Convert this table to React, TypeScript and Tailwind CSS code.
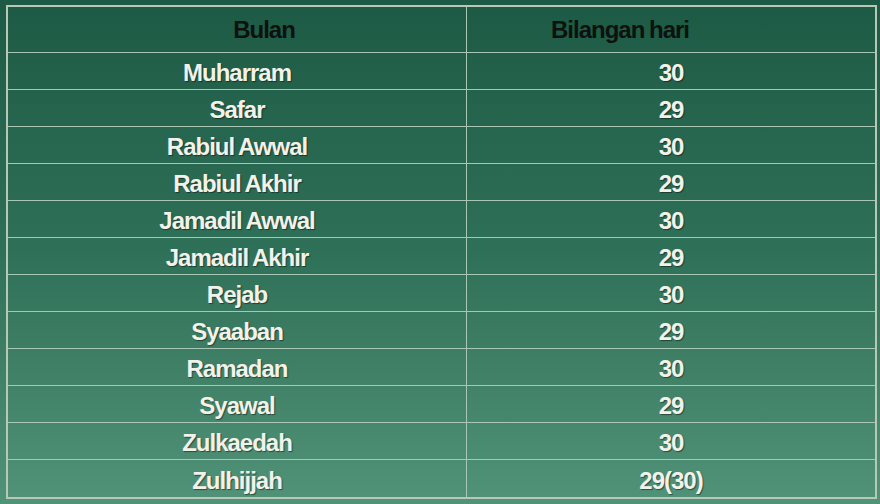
const rows: [string, string][] = [
  ["Muharram", "30"],
  ["Safar", "29"],
  ["Rabiul Awwal", "30"],
  ["Rabiul Akhir", "29"],
  ["Jamadil Awwal", "30"],
  ["Jamadil Akhir", "29"],
  ["Rejab", "30"],
  ["Syaaban", "29"],
  ["Ramadan", "30"],
  ["Syawal", "29"],
  ["Zulkaedah", "30"],
  ["Zulhijjah", "29(30)"],
];

export default function App() {
  return (
    <div className="w-[880px] h-[504px] bg-gradient-to-b from-[#1d5a45] via-[#2f7058] to-[#519378] pt-[5px] pl-[6px] font-['Liberation_Sans',Arial,sans-serif] font-bold text-[24px] tracking-[-1px] [word-spacing:-1px]">
      <div className="w-[871px] border-2 border-[#b9c7b6]">
        {/* Header */}
        <div className="flex h-[46px] border-b border-[#a9c7b5] text-[#0d120f]">
          <div className="w-[459px] flex items-center justify-center pl-[54px] border-r border-[#a9c7b5]">
            Bulan
          </div>
          <div className="flex-1 flex items-center justify-center pr-[102px]">
            Bilangan hari
          </div>
        </div>

        {rows.map(([bulan, hari], i) => (
          <div
            key={bulan}
            className={`flex h-[37px] text-[#f2f2ea] [text-shadow:1px_1px_1px_rgba(0,0,0,0.45)] ${
              i < rows.length - 1 ? "border-b border-[#a9c7b5]" : ""
            }`}
          >
            <div className="w-[459px] pt-[4px] flex items-center justify-center border-r border-[#a9c7b5]">
              {bulan}
            </div>
            <div className="flex-1 pt-[4px] flex items-center justify-center">{hari}</div>
          </div>
        ))}
      </div>
    </div>
  );
}
